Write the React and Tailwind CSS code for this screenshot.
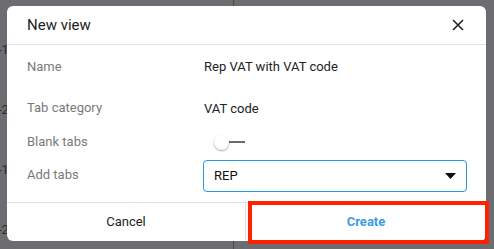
import React from "react";

export default function App() {
  const font = { fontFamily: "Roboto, 'Liberation Sans', sans-serif" };
  return (
    <div className="relative w-[494px] h-[249px] overflow-hidden bg-[#6d6d71]" style={font}>
      {/* background page content */}
      <div className="flex h-full">
        <div className="w-[234px] h-full border-r border-[#4a4a4d] relative">
          <div className="absolute left-[-2px] top-[42px] text-[13px] leading-[16px] text-[#2a2a2a]">-1</div>
          <div className="absolute left-[-2px] top-[102px] text-[13px] leading-[16px] text-[#2a2a2a]">-2</div>
          <div className="absolute left-[-2px] top-[162px] text-[13px] leading-[16px] text-[#2a2a2a]">-1</div>
          <div className="absolute left-[-2px] top-[222px] text-[13px] leading-[16px] text-[#2a2a2a]">-2</div>
        </div>
      </div>

      {/* dialog */}
      <div className="absolute left-[7px] top-[6px] w-[479px] h-[235px] bg-white rounded-[6px] flex flex-col">
        <div className="h-[39px] flex items-center justify-between pl-[20px] pr-[22px] border-b border-[#e0e0e0]">
          <span className="text-[15px] text-[#222]">New view</span>
          <svg width="12" height="12" viewBox="0 0 12 12">
            <path d="M1 1 L11 11 M11 1 L1 11" stroke="#222" strokeWidth="1.6" />
          </svg>
        </div>
        <div className="flex-1 flex flex-col pl-[20px] pr-[19px]">
          <div className="flex items-center h-[34px] mt-[5px]">
            <span className="w-[177px] text-[13px] text-[#7a7a7a]">Name</span>
            <span className="text-[13px] text-[#222]">Rep VAT with VAT code</span>
          </div>
          <div className="flex items-center h-[34px] mt-[7px]">
            <span className="w-[177px] text-[13px] text-[#7a7a7a]">Tab category</span>
            <span className="text-[13px] text-[#222] pt-[2px]">VAT code</span>
          </div>
          <div className="flex items-center h-[34px]">
            <span className="w-[187px] text-[13px] text-[#7a7a7a]">Blank tabs</span>
            <div className="relative w-[32px] h-[16px] flex items-center">
              <div className="absolute left-[10px] right-[1px] h-[2px] bg-[#6b6b6b]" />
              <div className="absolute left-0 w-[15px] h-[15px] rounded-full bg-white shadow-[0_1px_2px_rgba(0,0,0,0.35)]" />
            </div>
          </div>
          <div className="flex items-center mt-[1px]">
            <span className="w-[176px] text-[13px] text-[#7a7a7a] pb-[2px]">Add tabs</span>
            <div className="w-[264px] h-[32px] border border-[#2196f3] rounded-[4px] flex items-center justify-between pl-[10px] pr-[10px]">
              <span className="text-[13px] text-[#111]">REP</span>
              <svg width="11" height="6" viewBox="0 0 11 6">
                <path d="M0 0 L11 0 L5.5 6 Z" fill="#111" />
              </svg>
            </div>
          </div>
        </div>
        <div className="h-[39px] flex border-t border-[#e0e0e0]">
          <div className="w-[239px] flex items-center justify-center border-r border-[#e0e0e0]">
            <span className="text-[13px] text-[#222]">Cancel</span>
          </div>
          <div className="flex-1 flex items-center justify-center">
            <span className="text-[13px] font-bold text-[#3d9be0]">Create</span>
          </div>
        </div>
      </div>

      {/* highlight box */}
      <div className="absolute left-[248px] top-[201px] w-[241px] h-[43px] border-[4px] border-[#ff2200]" />
    </div>
  );
}
